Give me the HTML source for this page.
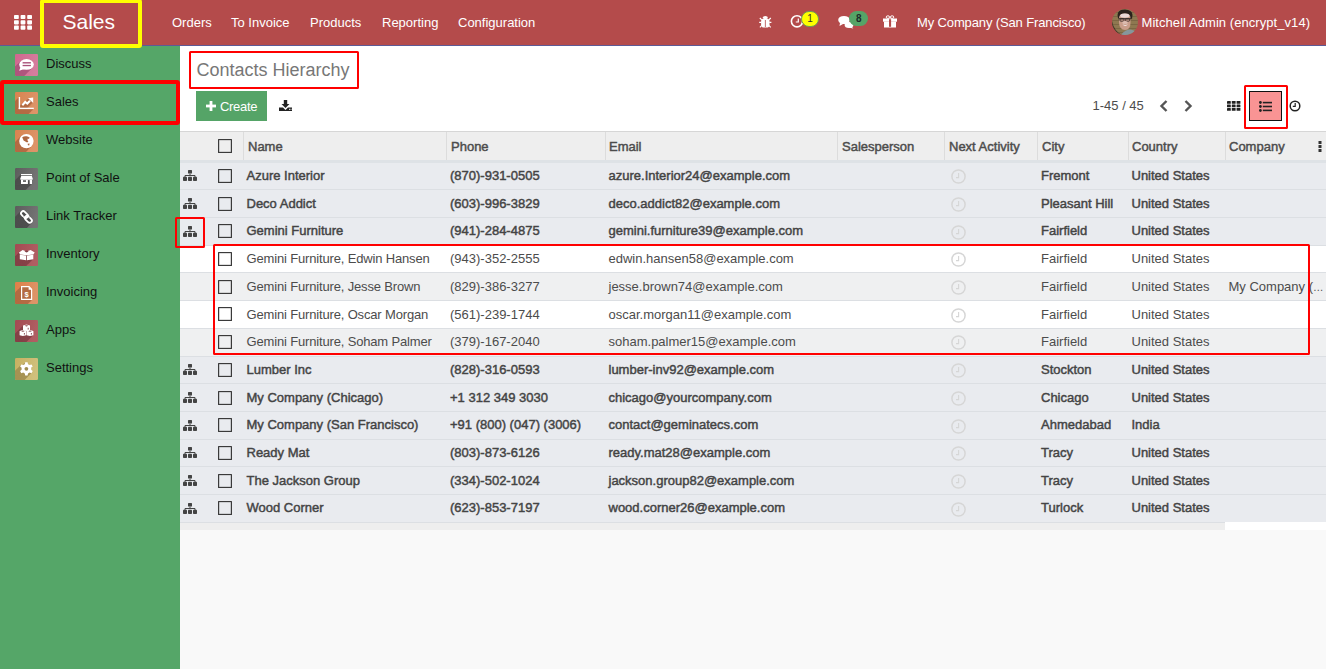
<!DOCTYPE html>
<html><head><meta charset="utf-8"><style>
html,body{margin:0;padding:0}
body{width:1326px;height:669px;overflow:hidden;position:relative;background:#f9f9f9;font-family:"Liberation Sans",sans-serif;}
.t{position:absolute;white-space:nowrap}
.b{-webkit-text-stroke:0.45px currentColor}
.hi{position:absolute}
.cb{position:absolute;width:12px;height:12px;border:1px solid #3a3a3a;border-radius:0.6px;box-shadow:inset 0 0 0 0.3px #777}
.rb{position:absolute}
#nav{position:absolute;left:0;top:0;width:1326px;height:45px;background:#b44b4b;border-bottom:1px solid #5d5a96}
#side{position:absolute;left:0;top:46px;width:180px;height:623px;background:#55a668}
#cp{position:absolute;left:180px;top:46px;width:1146px;height:85px;background:#fff}
</style></head><body>
<div id="side"></div>
<div id="cp"></div>
<div id="nav"></div>
<svg style="position:absolute;left:13.6px;top:14.6px" width="19" height="15" fill="#fff"><rect x="0.0" y="0.0" width="4.8" height="4.1" rx="0.8"/><rect x="6.6" y="0.0" width="4.8" height="4.1" rx="0.8"/><rect x="13.2" y="0.0" width="4.8" height="4.1" rx="0.8"/><rect x="0.0" y="5.3" width="4.8" height="4.1" rx="0.8"/><rect x="6.6" y="5.3" width="4.8" height="4.1" rx="0.8"/><rect x="13.2" y="5.3" width="4.8" height="4.1" rx="0.8"/><rect x="0.0" y="10.6" width="4.8" height="4.1" rx="0.8"/><rect x="6.6" y="10.6" width="4.8" height="4.1" rx="0.8"/><rect x="13.2" y="10.6" width="4.8" height="4.1" rx="0.8"/></svg>
<div class="t" style="left:62.5px;top:6.30px;font-size:21px;line-height:31px;color:#fff;">Sales</div>
<div class="t" style="left:172px;top:12.50px;font-size:13px;line-height:20px;color:#fff;">Orders</div>
<div class="t" style="left:231px;top:12.50px;font-size:13px;line-height:20px;color:#fff;">To Invoice</div>
<div class="t" style="left:310px;top:12.50px;font-size:13px;line-height:20px;color:#fff;">Products</div>
<div class="t" style="left:382px;top:12.50px;font-size:13px;line-height:20px;color:#fff;">Reporting</div>
<div class="t" style="left:458px;top:12.50px;font-size:13px;line-height:20px;color:#fff;">Configuration</div>
<svg style="position:absolute;left:759px;top:15px" width="13" height="13" viewBox="0 0 13 13" fill="#fff">
<ellipse cx="6.3" cy="2.6" rx="2.5" ry="1.6"/><rect x="2.1" y="3.4" width="8.4" height="9.2" rx="3.2"/>
<path d="M0.8 3 L2.9 5 M11.8 3 L9.7 5 M0.2 7.4 H2.4 M12.4 7.4 H10.2 M0.9 12.4 L2.8 10.4 M11.7 12.4 L9.8 10.4" stroke="#fff" stroke-width="1.1"/>
<rect x="5.9" y="5" width="0.8" height="7" fill="#b44b4b"/></svg>
<svg style="position:absolute;left:790px;top:14px" width="14" height="14" viewBox="0 0 14 14">
<circle cx="7" cy="7.3" r="5.6" fill="none" stroke="#fff" stroke-width="1.6"/>
<path d="M8.3 4.4 V8 H5.8" fill="none" stroke="#fff" stroke-width="1.2"/></svg>
<div style="position:absolute;left:801px;top:11.2px;width:15.6px;height:13.6px;border-radius:8px;background:#ffff00;border:1px solid #6c9d55"></div>
<div class="t" style="left:807.3px;top:8.70px;font-size:10px;line-height:20px;color:#333;">1</div>
<svg style="position:absolute;left:838px;top:15px" width="16" height="14" viewBox="0 0 16 14" fill="#fff">
<ellipse cx="6" cy="5" rx="5.8" ry="4.1"/><path d="M2 8 L1.5 11 L5.5 8.8 Z"/>
<ellipse cx="11" cy="10" rx="4.4" ry="3"/><path d="M13.5 11.5 L15.3 13.4 L10.5 12.6 Z"/></svg>
<div style="position:absolute;left:849px;top:11px;width:19px;height:15px;border-radius:8px;background:#55a467"></div>
<div class="t" style="left:856px;top:8.70px;font-size:10px;line-height:20px;color:#1c2a2a;font-weight:bold">8</div>
<svg style="position:absolute;left:883px;top:14.5px" width="14" height="13" viewBox="0 0 14 13" fill="#fff">
<ellipse cx="4.9" cy="2.1" rx="1.7" ry="1.3" fill="none" stroke="#fff" stroke-width="1"/><ellipse cx="9.1" cy="2.1" rx="1.7" ry="1.3" fill="none" stroke="#fff" stroke-width="1"/>
<rect x="0" y="3.5" width="14" height="3.2"/><rect x="1" y="6.6" width="12" height="5.9"/>
<rect x="6" y="4.2" width="2.1" height="7.6" fill="#b44b4b"/></svg>
<div class="t" style="left:917px;top:12.50px;font-size:13px;line-height:20px;color:#fff;letter-spacing:-0.13px">My Company (San Francisco)</div>
<svg style="position:absolute;left:1112px;top:9px" width="26" height="26" viewBox="0 0 26 26">
<defs><clipPath id="av"><circle cx="13" cy="13" r="13"/></clipPath><filter id="bl" filterUnits="userSpaceOnUse" x="-5" y="-5" width="36" height="36"><feGaussianBlur stdDeviation="0.45"/></filter></defs>
<g clip-path="url(#av)"><rect width="26" height="26" fill="#8e7850"/>
<g filter="url(#bl)">
<path d="M0 3.5 H26 M0 7.5 H26 M0 11.5 H26 M0 15.5 H26 M0 19.5 H26 M0 23.5 H26" stroke="#6e5a3a" stroke-width="0.8" opacity="0.7"/>
<path d="M0 12 Q2 22 10 26 H0 Z" fill="#3a2e24" opacity="0.9"/>
<path d="M5.5 6 Q6 0.5 13 0.6 Q20 0.8 20.5 6 L20 10 L18 9 Q17 5 13 5 Q8 5 7.5 9 L6 9Z" fill="#2a231e"/>
<path d="M7 9 Q7 4.5 13 4.5 Q18.5 4.5 18.5 9 V14 Q18.5 20.5 13 21 Q7.5 20.5 7 14Z" fill="#c99d8a"/>
<ellipse cx="12.8" cy="6.6" rx="4.6" ry="2.2" fill="#ead8d6"/>
<path d="M6.3 9.2 H19.2 V10.3 H6.3Z" fill="#2e2624"/>
<rect x="8" y="9.8" width="4" height="2.4" rx="0.8" fill="none" stroke="#2e2624" stroke-width="0.8"/>
<rect x="13.6" y="9.8" width="4" height="2.4" rx="0.8" fill="none" stroke="#2e2624" stroke-width="0.8"/>
<ellipse cx="13" cy="13.5" rx="2.8" ry="1.6" fill="#dcbcb0"/>
<path d="M10.4 15.6 Q13.2 18.4 16 15.6 Q13.2 16.4 10.4 15.6Z" fill="#f2e6e4"/>
<path d="M9 26 Q13 20.5 18 20.5 Q23 21 25 24 V26Z" fill="#86969c"/>
</g></g></svg>
<div class="t" style="left:1141.5px;top:12.50px;font-size:13px;line-height:20px;color:#fff;letter-spacing:0.06px">Mitchell Admin (encrypt_v14)</div>
<svg style="position:absolute;left:15px;top:54px" width="23" height="22" viewBox="0 0 23 22"><defs><linearGradient id="lg0" x1="0" y1="0" x2="1" y2="0.3"><stop offset="0" stop-color="#d0678e"/><stop offset="1" stop-color="#d57d9d"/></linearGradient><clipPath id="cp0"><rect width="23" height="22" rx="1.2"/></clipPath><g id="gl0"><ellipse cx="11.5" cy="10.4" rx="7.3" ry="5.3"/><path d="M4.2 16.8 L5.6 12.8 L9.5 15Z"/></g></defs><g clip-path="url(#cp0)"><rect width="23" height="22" fill="url(#lg0)"/><g color="#a9537a" fill="#a9537a" opacity="0.85"><use href="#gl0" x="-0.7" y="0.7"/><use href="#gl0" x="-1.4" y="1.4"/><use href="#gl0" x="-2.1" y="2.1"/><use href="#gl0" x="-2.8" y="2.8"/><use href="#gl0" x="-3.5" y="3.5"/><use href="#gl0" x="-4.2" y="4.2"/><use href="#gl0" x="-4.9" y="4.9"/><use href="#gl0" x="-5.6" y="5.6"/><use href="#gl0" x="-6.3" y="6.3"/><use href="#gl0" x="-7.0" y="7.0"/><use href="#gl0" x="-7.7" y="7.7"/><use href="#gl0" x="-8.4" y="8.4"/><use href="#gl0" x="-9.1" y="9.1"/><use href="#gl0" x="-9.8" y="9.8"/><use href="#gl0" x="-10.5" y="10.5"/><use href="#gl0" x="-11.2" y="11.2"/><use href="#gl0" x="-11.9" y="11.9"/><use href="#gl0" x="-12.6" y="12.6"/><use href="#gl0" x="-13.3" y="13.3"/><use href="#gl0" x="-14.0" y="14.0"/><use href="#gl0" x="-14.7" y="14.7"/><use href="#gl0" x="-15.4" y="15.4"/><use href="#gl0" x="-16.1" y="16.1"/><use href="#gl0" x="-16.8" y="16.8"/><use href="#gl0" x="-17.5" y="17.5"/><use href="#gl0" x="-18.2" y="18.2"/><use href="#gl0" x="-18.9" y="18.9"/><use href="#gl0" x="-19.6" y="19.6"/><use href="#gl0" x="-20.3" y="20.3"/><use href="#gl0" x="-21.0" y="21.0"/><use href="#gl0" x="-21.7" y="21.7"/><use href="#gl0" x="-22.4" y="22.4"/><use href="#gl0" x="-23.1" y="23.1"/></g><g color="#fff" fill="#fff"><ellipse cx="11.5" cy="10.4" rx="7.3" ry="5.3"/><path d="M4.2 16.8 L5.6 12.8 L9.5 15Z"/></g><rect x="7.6" y="8.1" width="8.3" height="1.4" fill="#a9537a"/><rect x="7.6" y="10.9" width="8.3" height="1.3" fill="#a9537a"/></g></svg>
<div class="t" style="left:46px;top:53.70px;font-size:13px;line-height:20px;color:#111;">Discuss</div>
<svg style="position:absolute;left:15px;top:92px" width="23" height="22" viewBox="0 0 23 22"><defs><linearGradient id="lg1" x1="0" y1="0" x2="1" y2="0.3"><stop offset="0" stop-color="#d9834f"/><stop offset="1" stop-color="#dc9468"/></linearGradient><clipPath id="cp1"><rect width="23" height="22" rx="1.2"/></clipPath><g id="gl1"><rect x="3.7" y="5" width="1.4" height="12.1"/><rect x="3.7" y="15.7" width="15.1" height="1.4"/><path d="M7.3 13.2 L10.2 10 L12.3 11.6 L15 8.8" fill="none" stroke="currentColor" stroke-width="2.1"/><path d="M13 6.2 L18.2 5.5 L18.2 10.9Z"/></g></defs><g clip-path="url(#cp1)"><rect width="23" height="22" fill="url(#lg1)"/><g color="#ad6640" fill="#ad6640" opacity="0.85"><use href="#gl1" x="-0.7" y="0.7"/><use href="#gl1" x="-1.4" y="1.4"/><use href="#gl1" x="-2.1" y="2.1"/><use href="#gl1" x="-2.8" y="2.8"/><use href="#gl1" x="-3.5" y="3.5"/><use href="#gl1" x="-4.2" y="4.2"/><use href="#gl1" x="-4.9" y="4.9"/><use href="#gl1" x="-5.6" y="5.6"/><use href="#gl1" x="-6.3" y="6.3"/><use href="#gl1" x="-7.0" y="7.0"/><use href="#gl1" x="-7.7" y="7.7"/><use href="#gl1" x="-8.4" y="8.4"/><use href="#gl1" x="-9.1" y="9.1"/><use href="#gl1" x="-9.8" y="9.8"/><use href="#gl1" x="-10.5" y="10.5"/><use href="#gl1" x="-11.2" y="11.2"/><use href="#gl1" x="-11.9" y="11.9"/><use href="#gl1" x="-12.6" y="12.6"/><use href="#gl1" x="-13.3" y="13.3"/><use href="#gl1" x="-14.0" y="14.0"/><use href="#gl1" x="-14.7" y="14.7"/><use href="#gl1" x="-15.4" y="15.4"/><use href="#gl1" x="-16.1" y="16.1"/><use href="#gl1" x="-16.8" y="16.8"/><use href="#gl1" x="-17.5" y="17.5"/><use href="#gl1" x="-18.2" y="18.2"/><use href="#gl1" x="-18.9" y="18.9"/><use href="#gl1" x="-19.6" y="19.6"/><use href="#gl1" x="-20.3" y="20.3"/><use href="#gl1" x="-21.0" y="21.0"/><use href="#gl1" x="-21.7" y="21.7"/><use href="#gl1" x="-22.4" y="22.4"/><use href="#gl1" x="-23.1" y="23.1"/></g><g color="#fff" fill="#fff"><rect x="3.7" y="5" width="1.4" height="12.1"/><rect x="3.7" y="15.7" width="15.1" height="1.4"/><path d="M7.3 13.2 L10.2 10 L12.3 11.6 L15 8.8" fill="none" stroke="#fff" stroke-width="2.1"/><path d="M13 6.2 L18.2 5.5 L18.2 10.9Z"/></g></g></svg>
<div class="t" style="left:46px;top:91.70px;font-size:13px;line-height:20px;color:#111;">Sales</div>
<svg style="position:absolute;left:15px;top:130px" width="23" height="22" viewBox="0 0 23 22"><defs><linearGradient id="lg2" x1="0" y1="0" x2="1" y2="0.3"><stop offset="0" stop-color="#d9834f"/><stop offset="1" stop-color="#dc9468"/></linearGradient><clipPath id="cp2"><rect width="23" height="22" rx="1.2"/></clipPath><g id="gl2"><circle cx="11.4" cy="11.1" r="7.2"/></g></defs><g clip-path="url(#cp2)"><rect width="23" height="22" fill="url(#lg2)"/><g color="#ad6640" fill="#ad6640" opacity="0.85"><use href="#gl2" x="-0.7" y="0.7"/><use href="#gl2" x="-1.4" y="1.4"/><use href="#gl2" x="-2.1" y="2.1"/><use href="#gl2" x="-2.8" y="2.8"/><use href="#gl2" x="-3.5" y="3.5"/><use href="#gl2" x="-4.2" y="4.2"/><use href="#gl2" x="-4.9" y="4.9"/><use href="#gl2" x="-5.6" y="5.6"/><use href="#gl2" x="-6.3" y="6.3"/><use href="#gl2" x="-7.0" y="7.0"/><use href="#gl2" x="-7.7" y="7.7"/><use href="#gl2" x="-8.4" y="8.4"/><use href="#gl2" x="-9.1" y="9.1"/><use href="#gl2" x="-9.8" y="9.8"/><use href="#gl2" x="-10.5" y="10.5"/><use href="#gl2" x="-11.2" y="11.2"/><use href="#gl2" x="-11.9" y="11.9"/><use href="#gl2" x="-12.6" y="12.6"/><use href="#gl2" x="-13.3" y="13.3"/><use href="#gl2" x="-14.0" y="14.0"/><use href="#gl2" x="-14.7" y="14.7"/><use href="#gl2" x="-15.4" y="15.4"/><use href="#gl2" x="-16.1" y="16.1"/><use href="#gl2" x="-16.8" y="16.8"/><use href="#gl2" x="-17.5" y="17.5"/><use href="#gl2" x="-18.2" y="18.2"/><use href="#gl2" x="-18.9" y="18.9"/><use href="#gl2" x="-19.6" y="19.6"/><use href="#gl2" x="-20.3" y="20.3"/><use href="#gl2" x="-21.0" y="21.0"/><use href="#gl2" x="-21.7" y="21.7"/><use href="#gl2" x="-22.4" y="22.4"/><use href="#gl2" x="-23.1" y="23.1"/></g><g color="#fff" fill="#fff"><circle cx="11.4" cy="11.1" r="7.2"/></g><path d="M7.2 7.2 Q9 5.9 11.5 6.2 L13.2 6.8 L14.8 7.8 L13.6 9 L12.8 8.6 L12.4 10.3 L13.4 11.6 L12.1 12.6 L10.3 11.4 L8.6 10.6 Z M12.6 13.8 L14.6 13.6 L14.2 15.6 L13 15.2Z" fill="#ad6640"/></g></svg>
<div class="t" style="left:46px;top:129.70px;font-size:13px;line-height:20px;color:#111;">Website</div>
<svg style="position:absolute;left:15px;top:168px" width="23" height="22" viewBox="0 0 23 22"><defs><linearGradient id="lg3" x1="0" y1="0" x2="1" y2="0.3"><stop offset="0" stop-color="#5c5c5c"/><stop offset="1" stop-color="#747474"/></linearGradient><clipPath id="cp3"><rect width="23" height="22" rx="1.2"/></clipPath><g id="gl3"><rect x="6" y="6" width="11" height="1.3"/><path d="M6.2 7.9 H16.8 L18 11.5 H5Z"/><rect x="6" y="11.4" width="11" height="4.6"/></g></defs><g clip-path="url(#cp3)"><rect width="23" height="22" fill="url(#lg3)"/><g color="#4a4a4a" fill="#4a4a4a" opacity="0.85"><use href="#gl3" x="-0.7" y="0.7"/><use href="#gl3" x="-1.4" y="1.4"/><use href="#gl3" x="-2.1" y="2.1"/><use href="#gl3" x="-2.8" y="2.8"/><use href="#gl3" x="-3.5" y="3.5"/><use href="#gl3" x="-4.2" y="4.2"/><use href="#gl3" x="-4.9" y="4.9"/><use href="#gl3" x="-5.6" y="5.6"/><use href="#gl3" x="-6.3" y="6.3"/><use href="#gl3" x="-7.0" y="7.0"/><use href="#gl3" x="-7.7" y="7.7"/><use href="#gl3" x="-8.4" y="8.4"/><use href="#gl3" x="-9.1" y="9.1"/><use href="#gl3" x="-9.8" y="9.8"/><use href="#gl3" x="-10.5" y="10.5"/><use href="#gl3" x="-11.2" y="11.2"/><use href="#gl3" x="-11.9" y="11.9"/><use href="#gl3" x="-12.6" y="12.6"/><use href="#gl3" x="-13.3" y="13.3"/><use href="#gl3" x="-14.0" y="14.0"/><use href="#gl3" x="-14.7" y="14.7"/><use href="#gl3" x="-15.4" y="15.4"/><use href="#gl3" x="-16.1" y="16.1"/><use href="#gl3" x="-16.8" y="16.8"/><use href="#gl3" x="-17.5" y="17.5"/><use href="#gl3" x="-18.2" y="18.2"/><use href="#gl3" x="-18.9" y="18.9"/><use href="#gl3" x="-19.6" y="19.6"/><use href="#gl3" x="-20.3" y="20.3"/><use href="#gl3" x="-21.0" y="21.0"/><use href="#gl3" x="-21.7" y="21.7"/><use href="#gl3" x="-22.4" y="22.4"/><use href="#gl3" x="-23.1" y="23.1"/></g><g color="#fff" fill="#fff"><rect x="6" y="6" width="11" height="1.3"/><path d="M6.2 7.9 H16.8 L18 11.5 H5Z"/><rect x="6" y="11.4" width="11" height="4.6"/></g><rect x="8" y="12.3" width="3" height="1.5" fill="#4a4a4a"/><rect x="12.9" y="12.1" width="1.8" height="3.9" fill="#4a4a4a"/></g></svg>
<div class="t" style="left:46px;top:167.70px;font-size:13px;line-height:20px;color:#111;">Point of Sale</div>
<svg style="position:absolute;left:15px;top:206px" width="23" height="22" viewBox="0 0 23 22"><defs><linearGradient id="lg4" x1="0" y1="0" x2="1" y2="0.3"><stop offset="0" stop-color="#5c5c5c"/><stop offset="1" stop-color="#747474"/></linearGradient><clipPath id="cp4"><rect width="23" height="22" rx="1.2"/></clipPath><g id="gl4"><g fill="none" stroke="currentColor" stroke-width="1.8" stroke-linecap="round"><path d="M-0.2 2.2 H-1.8 A2.2 2.2 0 0 1 -1.8 -2.2 H1.8 A2.2 2.2 0 0 1 1.8 2.2 H1.6" transform="translate(9.5 8.6) rotate(45)"/><path d="M0.2 -2.2 H1.8 A2.2 2.2 0 0 1 1.8 2.2 H-1.8 A2.2 2.2 0 0 1 -1.8 -2.2 H-1.6" transform="translate(13.4 13.3) rotate(45)"/></g></g></defs><g clip-path="url(#cp4)"><rect width="23" height="22" fill="url(#lg4)"/><g color="#4a4a4a" fill="#4a4a4a" opacity="0.85"><use href="#gl4" x="-0.7" y="0.7"/><use href="#gl4" x="-1.4" y="1.4"/><use href="#gl4" x="-2.1" y="2.1"/><use href="#gl4" x="-2.8" y="2.8"/><use href="#gl4" x="-3.5" y="3.5"/><use href="#gl4" x="-4.2" y="4.2"/><use href="#gl4" x="-4.9" y="4.9"/><use href="#gl4" x="-5.6" y="5.6"/><use href="#gl4" x="-6.3" y="6.3"/><use href="#gl4" x="-7.0" y="7.0"/><use href="#gl4" x="-7.7" y="7.7"/><use href="#gl4" x="-8.4" y="8.4"/><use href="#gl4" x="-9.1" y="9.1"/><use href="#gl4" x="-9.8" y="9.8"/><use href="#gl4" x="-10.5" y="10.5"/><use href="#gl4" x="-11.2" y="11.2"/><use href="#gl4" x="-11.9" y="11.9"/><use href="#gl4" x="-12.6" y="12.6"/><use href="#gl4" x="-13.3" y="13.3"/><use href="#gl4" x="-14.0" y="14.0"/><use href="#gl4" x="-14.7" y="14.7"/><use href="#gl4" x="-15.4" y="15.4"/><use href="#gl4" x="-16.1" y="16.1"/><use href="#gl4" x="-16.8" y="16.8"/><use href="#gl4" x="-17.5" y="17.5"/><use href="#gl4" x="-18.2" y="18.2"/><use href="#gl4" x="-18.9" y="18.9"/><use href="#gl4" x="-19.6" y="19.6"/><use href="#gl4" x="-20.3" y="20.3"/><use href="#gl4" x="-21.0" y="21.0"/><use href="#gl4" x="-21.7" y="21.7"/><use href="#gl4" x="-22.4" y="22.4"/><use href="#gl4" x="-23.1" y="23.1"/></g><g color="#fff" fill="#fff"><g fill="none" stroke="#fff" stroke-width="1.8" stroke-linecap="round"><path d="M-0.2 2.2 H-1.8 A2.2 2.2 0 0 1 -1.8 -2.2 H1.8 A2.2 2.2 0 0 1 1.8 2.2 H1.6" transform="translate(9.5 8.6) rotate(45)"/><path d="M0.2 -2.2 H1.8 A2.2 2.2 0 0 1 1.8 2.2 H-1.8 A2.2 2.2 0 0 1 -1.8 -2.2 H-1.6" transform="translate(13.4 13.3) rotate(45)"/></g></g></g></svg>
<div class="t" style="left:46px;top:205.70px;font-size:13px;line-height:20px;color:#111;">Link Tracker</div>
<svg style="position:absolute;left:15px;top:244px" width="23" height="22" viewBox="0 0 23 22"><defs><linearGradient id="lg5" x1="0" y1="0" x2="1" y2="0.3"><stop offset="0" stop-color="#a34a52"/><stop offset="1" stop-color="#b05e62"/></linearGradient><clipPath id="cp5"><rect width="23" height="22" rx="1.2"/></clipPath><g id="gl5"><path d="M4 8.4 L7.6 6 L11.6 7.6 L15.6 6 L19.7 8.4 L18.4 10.6 L11.6 11.2 L5 10.6Z"/><path d="M4.8 10.8 L11.2 11.6 V16.2 L4.8 15.2Z M18.3 10.8 L12 11.6 V16.2 L18.3 15.2Z"/></g></defs><g clip-path="url(#cp5)"><rect width="23" height="22" fill="url(#lg5)"/><g color="#7f3f45" fill="#7f3f45" opacity="0.85"><use href="#gl5" x="-0.7" y="0.7"/><use href="#gl5" x="-1.4" y="1.4"/><use href="#gl5" x="-2.1" y="2.1"/><use href="#gl5" x="-2.8" y="2.8"/><use href="#gl5" x="-3.5" y="3.5"/><use href="#gl5" x="-4.2" y="4.2"/><use href="#gl5" x="-4.9" y="4.9"/><use href="#gl5" x="-5.6" y="5.6"/><use href="#gl5" x="-6.3" y="6.3"/><use href="#gl5" x="-7.0" y="7.0"/><use href="#gl5" x="-7.7" y="7.7"/><use href="#gl5" x="-8.4" y="8.4"/><use href="#gl5" x="-9.1" y="9.1"/><use href="#gl5" x="-9.8" y="9.8"/><use href="#gl5" x="-10.5" y="10.5"/><use href="#gl5" x="-11.2" y="11.2"/><use href="#gl5" x="-11.9" y="11.9"/><use href="#gl5" x="-12.6" y="12.6"/><use href="#gl5" x="-13.3" y="13.3"/><use href="#gl5" x="-14.0" y="14.0"/><use href="#gl5" x="-14.7" y="14.7"/><use href="#gl5" x="-15.4" y="15.4"/><use href="#gl5" x="-16.1" y="16.1"/><use href="#gl5" x="-16.8" y="16.8"/><use href="#gl5" x="-17.5" y="17.5"/><use href="#gl5" x="-18.2" y="18.2"/><use href="#gl5" x="-18.9" y="18.9"/><use href="#gl5" x="-19.6" y="19.6"/><use href="#gl5" x="-20.3" y="20.3"/><use href="#gl5" x="-21.0" y="21.0"/><use href="#gl5" x="-21.7" y="21.7"/><use href="#gl5" x="-22.4" y="22.4"/><use href="#gl5" x="-23.1" y="23.1"/></g><g color="#fff" fill="#fff"><path d="M4 8.4 L7.6 6 L11.6 7.6 L15.6 6 L19.7 8.4 L18.4 10.6 L11.6 11.2 L5 10.6Z"/><path d="M4.8 10.8 L11.2 11.6 V16.2 L4.8 15.2Z M18.3 10.8 L12 11.6 V16.2 L18.3 15.2Z"/></g><path d="M9.5 7.6 L11.6 6.6 L13.7 7.6 L11.6 8.6Z" fill="#7f3f45"/></g></svg>
<div class="t" style="left:46px;top:243.70px;font-size:13px;line-height:20px;color:#111;">Inventory</div>
<svg style="position:absolute;left:15px;top:282px" width="23" height="22" viewBox="0 0 23 22"><defs><linearGradient id="lg6" x1="0" y1="0" x2="1" y2="0.3"><stop offset="0" stop-color="#df7f47"/><stop offset="1" stop-color="#dc9468"/></linearGradient><clipPath id="cp6"><rect width="23" height="22" rx="1.2"/></clipPath><g id="gl6"><path d="M6.6 4.7 H14 L16.6 7.3 V17.4 H6.6Z" fill="none" stroke="currentColor" stroke-width="1.2"/><path d="M13.6 4.6 V7.7 H16.7Z"/><text x="11.6" y="14.6" text-anchor="middle" font-size="7.5" font-weight="bold" font-family="Liberation Sans" fill="currentColor">$</text></g></defs><g clip-path="url(#cp6)"><rect width="23" height="22" fill="url(#lg6)"/><g color="#ad6640" fill="#ad6640" opacity="0.85"><use href="#gl6" x="-0.7" y="0.7"/><use href="#gl6" x="-1.4" y="1.4"/><use href="#gl6" x="-2.1" y="2.1"/><use href="#gl6" x="-2.8" y="2.8"/><use href="#gl6" x="-3.5" y="3.5"/><use href="#gl6" x="-4.2" y="4.2"/><use href="#gl6" x="-4.9" y="4.9"/><use href="#gl6" x="-5.6" y="5.6"/><use href="#gl6" x="-6.3" y="6.3"/><use href="#gl6" x="-7.0" y="7.0"/><use href="#gl6" x="-7.7" y="7.7"/><use href="#gl6" x="-8.4" y="8.4"/><use href="#gl6" x="-9.1" y="9.1"/><use href="#gl6" x="-9.8" y="9.8"/><use href="#gl6" x="-10.5" y="10.5"/><use href="#gl6" x="-11.2" y="11.2"/><use href="#gl6" x="-11.9" y="11.9"/><use href="#gl6" x="-12.6" y="12.6"/><use href="#gl6" x="-13.3" y="13.3"/><use href="#gl6" x="-14.0" y="14.0"/><use href="#gl6" x="-14.7" y="14.7"/><use href="#gl6" x="-15.4" y="15.4"/><use href="#gl6" x="-16.1" y="16.1"/><use href="#gl6" x="-16.8" y="16.8"/><use href="#gl6" x="-17.5" y="17.5"/><use href="#gl6" x="-18.2" y="18.2"/><use href="#gl6" x="-18.9" y="18.9"/><use href="#gl6" x="-19.6" y="19.6"/><use href="#gl6" x="-20.3" y="20.3"/><use href="#gl6" x="-21.0" y="21.0"/><use href="#gl6" x="-21.7" y="21.7"/><use href="#gl6" x="-22.4" y="22.4"/><use href="#gl6" x="-23.1" y="23.1"/></g><g color="#fff" fill="#fff"><path d="M6.6 4.7 H14 L16.6 7.3 V17.4 H6.6Z" fill="none" stroke="#fff" stroke-width="1.2"/><path d="M13.6 4.6 V7.7 H16.7Z"/><text x="11.6" y="14.6" text-anchor="middle" font-size="7.5" font-weight="bold" font-family="Liberation Sans" fill="#fff">$</text></g></g></svg>
<div class="t" style="left:46px;top:281.70px;font-size:13px;line-height:20px;color:#111;">Invoicing</div>
<svg style="position:absolute;left:15px;top:320px" width="23" height="22" viewBox="0 0 23 22"><defs><linearGradient id="lg7" x1="0" y1="0" x2="1" y2="0.3"><stop offset="0" stop-color="#a34a52"/><stop offset="1" stop-color="#b05e62"/></linearGradient><clipPath id="cp7"><rect width="23" height="22" rx="1.2"/></clipPath><g id="gl7"><path d="M8 5.5 L11.5 4.4 L15 5.5 V10 L11.5 11 L8 10Z M4.6 11 L7.9 10 L11.2 11 V15.2 L7.9 16.1 L4.6 15.2Z M11.6 11 L15 10 L18.4 11 V15.2 L15 16.1 L11.6 15.2Z"/></g></defs><g clip-path="url(#cp7)"><rect width="23" height="22" fill="url(#lg7)"/><g color="#7f3f45" fill="#7f3f45" opacity="0.85"><use href="#gl7" x="-0.7" y="0.7"/><use href="#gl7" x="-1.4" y="1.4"/><use href="#gl7" x="-2.1" y="2.1"/><use href="#gl7" x="-2.8" y="2.8"/><use href="#gl7" x="-3.5" y="3.5"/><use href="#gl7" x="-4.2" y="4.2"/><use href="#gl7" x="-4.9" y="4.9"/><use href="#gl7" x="-5.6" y="5.6"/><use href="#gl7" x="-6.3" y="6.3"/><use href="#gl7" x="-7.0" y="7.0"/><use href="#gl7" x="-7.7" y="7.7"/><use href="#gl7" x="-8.4" y="8.4"/><use href="#gl7" x="-9.1" y="9.1"/><use href="#gl7" x="-9.8" y="9.8"/><use href="#gl7" x="-10.5" y="10.5"/><use href="#gl7" x="-11.2" y="11.2"/><use href="#gl7" x="-11.9" y="11.9"/><use href="#gl7" x="-12.6" y="12.6"/><use href="#gl7" x="-13.3" y="13.3"/><use href="#gl7" x="-14.0" y="14.0"/><use href="#gl7" x="-14.7" y="14.7"/><use href="#gl7" x="-15.4" y="15.4"/><use href="#gl7" x="-16.1" y="16.1"/><use href="#gl7" x="-16.8" y="16.8"/><use href="#gl7" x="-17.5" y="17.5"/><use href="#gl7" x="-18.2" y="18.2"/><use href="#gl7" x="-18.9" y="18.9"/><use href="#gl7" x="-19.6" y="19.6"/><use href="#gl7" x="-20.3" y="20.3"/><use href="#gl7" x="-21.0" y="21.0"/><use href="#gl7" x="-21.7" y="21.7"/><use href="#gl7" x="-22.4" y="22.4"/><use href="#gl7" x="-23.1" y="23.1"/></g><g color="#fff" fill="#fff"><path d="M8 5.5 L11.5 4.4 L15 5.5 V10 L11.5 11 L8 10Z M4.6 11 L7.9 10 L11.2 11 V15.2 L7.9 16.1 L4.6 15.2Z M11.6 11 L15 10 L18.4 11 V15.2 L15 16.1 L11.6 15.2Z"/></g><path d="M9.6 5.8 L11.5 5.2 L13.4 5.8 L11.5 6.4Z M6.2 11.2 L7.9 10.6 L9.6 11.2 L7.9 11.8Z M13.2 11.2 L15 10.6 L16.8 11.2 L15 11.8Z" fill="#7f3f45"/><path d="M13.2 7.8 V9.6 M9.4 13 V14.6 M16.4 13 V14.6" stroke="#7f3f45" stroke-width="0.9"/></g></svg>
<div class="t" style="left:46px;top:319.70px;font-size:13px;line-height:20px;color:#111;">Apps</div>
<svg style="position:absolute;left:15px;top:358px" width="23" height="22" viewBox="0 0 23 22"><defs><linearGradient id="lg8" x1="0" y1="0" x2="1" y2="0.3"><stop offset="0" stop-color="#c8b060"/><stop offset="1" stop-color="#cfc07c"/></linearGradient><clipPath id="cp8"><rect width="23" height="22" rx="1.2"/></clipPath><g id="gl8"><path d="M10.2 4.2 H12.6 L13 6.2 L14.6 7.1 L16.5 6.4 L17.7 8.5 L16.2 9.8 V11.8 L17.7 13.1 L16.5 15.2 L14.6 14.5 L13 15.4 L12.6 17.4 H10.2 L9.8 15.4 L8.2 14.5 L6.3 15.2 L5.1 13.1 L6.6 11.8 V9.8 L5.1 8.5 L6.3 6.4 L8.2 7.1 L9.8 6.2Z"/></g></defs><g clip-path="url(#cp8)"><rect width="23" height="22" fill="url(#lg8)"/><g color="#a08d50" fill="#a08d50" opacity="0.85"><use href="#gl8" x="-0.7" y="0.7"/><use href="#gl8" x="-1.4" y="1.4"/><use href="#gl8" x="-2.1" y="2.1"/><use href="#gl8" x="-2.8" y="2.8"/><use href="#gl8" x="-3.5" y="3.5"/><use href="#gl8" x="-4.2" y="4.2"/><use href="#gl8" x="-4.9" y="4.9"/><use href="#gl8" x="-5.6" y="5.6"/><use href="#gl8" x="-6.3" y="6.3"/><use href="#gl8" x="-7.0" y="7.0"/><use href="#gl8" x="-7.7" y="7.7"/><use href="#gl8" x="-8.4" y="8.4"/><use href="#gl8" x="-9.1" y="9.1"/><use href="#gl8" x="-9.8" y="9.8"/><use href="#gl8" x="-10.5" y="10.5"/><use href="#gl8" x="-11.2" y="11.2"/><use href="#gl8" x="-11.9" y="11.9"/><use href="#gl8" x="-12.6" y="12.6"/><use href="#gl8" x="-13.3" y="13.3"/><use href="#gl8" x="-14.0" y="14.0"/><use href="#gl8" x="-14.7" y="14.7"/><use href="#gl8" x="-15.4" y="15.4"/><use href="#gl8" x="-16.1" y="16.1"/><use href="#gl8" x="-16.8" y="16.8"/><use href="#gl8" x="-17.5" y="17.5"/><use href="#gl8" x="-18.2" y="18.2"/><use href="#gl8" x="-18.9" y="18.9"/><use href="#gl8" x="-19.6" y="19.6"/><use href="#gl8" x="-20.3" y="20.3"/><use href="#gl8" x="-21.0" y="21.0"/><use href="#gl8" x="-21.7" y="21.7"/><use href="#gl8" x="-22.4" y="22.4"/><use href="#gl8" x="-23.1" y="23.1"/></g><g color="#fff" fill="#fff"><path d="M10.2 4.2 H12.6 L13 6.2 L14.6 7.1 L16.5 6.4 L17.7 8.5 L16.2 9.8 V11.8 L17.7 13.1 L16.5 15.2 L14.6 14.5 L13 15.4 L12.6 17.4 H10.2 L9.8 15.4 L8.2 14.5 L6.3 15.2 L5.1 13.1 L6.6 11.8 V9.8 L5.1 8.5 L6.3 6.4 L8.2 7.1 L9.8 6.2Z"/></g><circle cx="11.4" cy="10.8" r="1.9" fill="#a08d50"/></g></svg>
<div class="t" style="left:46px;top:357.70px;font-size:13px;line-height:20px;color:#111;">Settings</div>
<div class="t" style="left:196.5px;top:57.20px;font-size:18px;line-height:27px;color:#777;">Contacts Hierarchy</div>
<div style="position:absolute;left:196px;top:91px;width:71px;height:30px;background:#55a467"></div>
<svg style="position:absolute;left:206px;top:101px" width="10" height="10"><rect x="3.6" y="0" width="2.8" height="10" fill="#fff"/><rect x="0" y="3.6" width="10" height="2.8" fill="#fff"/></svg>
<div class="t" style="left:220px;top:96.90px;font-size:13px;line-height:20px;color:#fff;letter-spacing:-0.3px">Create</div>
<svg style="position:absolute;left:279px;top:100px" width="13" height="11" viewBox="0 0 13 11"><path d="M4.8 0 H8.2 V4 H10.5 L6.5 8 L2.5 4 H4.8Z" fill="#222"/><path d="M0 7.5 H4 L6.5 10 L9 7.5 H13 V11 H0Z" fill="#222"/><rect x="10" y="8.8" width="1" height="1" fill="#fff"/><rect x="11.5" y="8.8" width="1" height="1" fill="#fff"/></svg>
<div class="t" style="left:1092.5px;top:95.50px;font-size:13px;line-height:20px;color:#4c4c4c;">1-45 / 45</div>
<svg style="position:absolute;left:1159px;top:100px" width="9" height="12" viewBox="0 0 9 12"><path d="M7.5 1 L2.5 6 L7.5 11" stroke="#555" stroke-width="2.4" fill="none"/></svg>
<svg style="position:absolute;left:1184px;top:100px" width="9" height="12" viewBox="0 0 9 12"><path d="M1.5 1 L6.5 6 L1.5 11" stroke="#555" stroke-width="2.4" fill="none"/></svg>
<svg style="position:absolute;left:1227.2px;top:100.8px" width="14" height="10" fill="#222"><rect x="0.0" y="0.0" width="3.8" height="2.8" rx="0.4"/><rect x="4.8" y="0.0" width="3.8" height="2.8" rx="0.4"/><rect x="9.6" y="0.0" width="3.8" height="2.8" rx="0.4"/><rect x="0.0" y="3.5" width="3.8" height="2.8" rx="0.4"/><rect x="4.8" y="3.5" width="3.8" height="2.8" rx="0.4"/><rect x="9.6" y="3.5" width="3.8" height="2.8" rx="0.4"/><rect x="0.0" y="7.0" width="3.8" height="2.8" rx="0.4"/><rect x="4.8" y="7.0" width="3.8" height="2.8" rx="0.4"/><rect x="9.6" y="7.0" width="3.8" height="2.8" rx="0.4"/></svg>
<div style="position:absolute;left:1249px;top:91px;width:31px;height:28px;border:1px solid #111;background:#f99494"></div>
<svg style="position:absolute;left:1259px;top:101px" width="13" height="11" viewBox="0 0 13 11" fill="#222"><circle cx="1.4" cy="1.5" r="1.4"/><circle cx="1.4" cy="5.5" r="1.4"/><circle cx="1.4" cy="9.5" r="1.4"/><rect x="3.8" y="0.8" width="9.2" height="1.6"/><rect x="3.8" y="4.7" width="9.2" height="1.6"/><rect x="3.8" y="8.6" width="9.2" height="1.6"/></svg>
<svg style="position:absolute;left:1289.3px;top:100.2px" width="12" height="12" viewBox="0 0 12 12"><circle cx="6" cy="6" r="4.8" fill="none" stroke="#222" stroke-width="1.5"/><path d="M6.2 3 V6.4 H3.8" fill="none" stroke="#222" stroke-width="1.2"/></svg>
<div style="position:absolute;left:180px;top:131px;width:1146px;height:1px;background:#d6d6d6"></div>
<div style="position:absolute;left:180px;top:132px;width:1146px;height:28px;background:#eeeeee"></div>
<div style="position:absolute;left:243.0px;top:132px;width:1px;height:28px;background:#dcdcdc"></div>
<div style="position:absolute;left:446.0px;top:132px;width:1px;height:28px;background:#dcdcdc"></div>
<div style="position:absolute;left:605.0px;top:132px;width:1px;height:28px;background:#dcdcdc"></div>
<div style="position:absolute;left:837.0px;top:132px;width:1px;height:28px;background:#dcdcdc"></div>
<div style="position:absolute;left:944.0px;top:132px;width:1px;height:28px;background:#dcdcdc"></div>
<div style="position:absolute;left:1037.0px;top:132px;width:1px;height:28px;background:#dcdcdc"></div>
<div style="position:absolute;left:1128.0px;top:132px;width:1px;height:28px;background:#dcdcdc"></div>
<div style="position:absolute;left:1225.0px;top:132px;width:1px;height:28px;background:#dcdcdc"></div>
<div class="cb" style="left:218px;top:139px"></div>
<div class="t b" style="left:248px;top:136.80px;font-size:13px;line-height:20px;color:#4c4c4c;">Name</div>
<div class="t b" style="left:451px;top:136.80px;font-size:13px;line-height:20px;color:#4c4c4c;">Phone</div>
<div class="t b" style="left:609px;top:136.80px;font-size:13px;line-height:20px;color:#4c4c4c;">Email</div>
<div class="t b" style="left:842px;top:136.80px;font-size:13px;line-height:20px;color:#4c4c4c;">Salesperson</div>
<div class="t b" style="left:949px;top:136.80px;font-size:13px;line-height:20px;color:#4c4c4c;">Next Activity</div>
<div class="t b" style="left:1042px;top:136.80px;font-size:13px;line-height:20px;color:#4c4c4c;">City</div>
<div class="t b" style="left:1132px;top:136.80px;font-size:13px;line-height:20px;color:#4c4c4c;">Country</div>
<div class="t b" style="left:1229px;top:136.80px;font-size:13px;line-height:20px;color:#4c4c4c;">Company</div>
<svg style="position:absolute;left:1318px;top:141px" width="4" height="11" fill="#333"><rect x="0.5" y="0" width="3" height="3"/><rect x="0.5" y="4" width="3" height="3"/><rect x="0.5" y="8" width="3" height="3"/></svg>
<div style="position:absolute;left:180px;top:161px;width:1146px;height:362px;background:#e9ebef"></div>
<div style="position:absolute;left:180px;top:162px;width:1146px;height:27px;background:#e9ebef;border-top:1px solid #dcdfe3;box-sizing:border-box"></div>
<svg class="hi" style="left:183px;top:170.20px" width="14" height="11" viewBox="0 0 14 11" fill="#444"><rect x="5" y="0" width="4" height="3.5" rx="0.5"/><path d="M7 3.5 V5.5 M2 7 V5.5 H12 V7" stroke="#444" stroke-width="1" fill="none"/><rect x="0" y="6.8" width="4" height="4.2" rx="0.8"/><rect x="5" y="6.8" width="4" height="4.2" rx="0.8"/><rect x="10" y="6.8" width="4" height="4.2" rx="0.8"/></svg>
<div class="cb" style="left:218px;top:168.90px"></div>
<div class="t b" style="left:246.5px;top:166.00px;font-size:13px;line-height:20px;color:#444;">Azure Interior</div>
<div class="t b" style="left:450px;top:166.00px;font-size:13px;line-height:20px;color:#444;">(870)-931-0505</div>
<div class="t b" style="left:608.5px;top:166.00px;font-size:13px;line-height:20px;color:#444;">azure.Interior24@example.com</div>
<svg class="hi" style="left:951px;top:169.20px" width="15" height="15" viewBox="0 0 15 15"><circle cx="7.5" cy="7.5" r="6.6" fill="none" stroke="#d6d6d6" stroke-width="1.5"/><path d="M7.6 4 V8.6 H5" fill="none" stroke="#d6d6d6" stroke-width="1.1"/></svg>
<div class="t b" style="left:1041px;top:166.00px;font-size:13px;line-height:20px;color:#444;">Fremont</div>
<div class="t b" style="left:1131.5px;top:166.00px;font-size:13px;line-height:20px;color:#444;">United States</div>
<div style="position:absolute;left:180px;top:189px;width:1146px;height:28px;background:#e9ebef;border-top:1px solid #dcdfe3;box-sizing:border-box"></div>
<svg class="hi" style="left:183px;top:197.90px" width="14" height="11" viewBox="0 0 14 11" fill="#444"><rect x="5" y="0" width="4" height="3.5" rx="0.5"/><path d="M7 3.5 V5.5 M2 7 V5.5 H12 V7" stroke="#444" stroke-width="1" fill="none"/><rect x="0" y="6.8" width="4" height="4.2" rx="0.8"/><rect x="5" y="6.8" width="4" height="4.2" rx="0.8"/><rect x="10" y="6.8" width="4" height="4.2" rx="0.8"/></svg>
<div class="cb" style="left:218px;top:196.60px"></div>
<div class="t b" style="left:246.5px;top:193.70px;font-size:13px;line-height:20px;color:#444;">Deco Addict</div>
<div class="t b" style="left:450px;top:193.70px;font-size:13px;line-height:20px;color:#444;">(603)-996-3829</div>
<div class="t b" style="left:608.5px;top:193.70px;font-size:13px;line-height:20px;color:#444;">deco.addict82@example.com</div>
<svg class="hi" style="left:951px;top:196.90px" width="15" height="15" viewBox="0 0 15 15"><circle cx="7.5" cy="7.5" r="6.6" fill="none" stroke="#d6d6d6" stroke-width="1.5"/><path d="M7.6 4 V8.6 H5" fill="none" stroke="#d6d6d6" stroke-width="1.1"/></svg>
<div class="t b" style="left:1041px;top:193.70px;font-size:13px;line-height:20px;color:#444;">Pleasant Hill</div>
<div class="t b" style="left:1131.5px;top:193.70px;font-size:13px;line-height:20px;color:#444;">United States</div>
<div style="position:absolute;left:180px;top:217px;width:1146px;height:28px;background:#e9ebef;border-top:1px solid #dcdfe3;box-sizing:border-box"></div>
<svg class="hi" style="left:183px;top:225.60px" width="14" height="11" viewBox="0 0 14 11" fill="#444"><rect x="5" y="0" width="4" height="3.5" rx="0.5"/><path d="M7 3.5 V5.5 M2 7 V5.5 H12 V7" stroke="#444" stroke-width="1" fill="none"/><rect x="0" y="6.8" width="4" height="4.2" rx="0.8"/><rect x="5" y="6.8" width="4" height="4.2" rx="0.8"/><rect x="10" y="6.8" width="4" height="4.2" rx="0.8"/></svg>
<div class="cb" style="left:218px;top:224.30px"></div>
<div class="t b" style="left:246.5px;top:221.40px;font-size:13px;line-height:20px;color:#444;">Gemini Furniture</div>
<div class="t b" style="left:450px;top:221.40px;font-size:13px;line-height:20px;color:#444;">(941)-284-4875</div>
<div class="t b" style="left:608.5px;top:221.40px;font-size:13px;line-height:20px;color:#444;">gemini.furniture39@example.com</div>
<svg class="hi" style="left:951px;top:224.60px" width="15" height="15" viewBox="0 0 15 15"><circle cx="7.5" cy="7.5" r="6.6" fill="none" stroke="#d6d6d6" stroke-width="1.5"/><path d="M7.6 4 V8.6 H5" fill="none" stroke="#d6d6d6" stroke-width="1.1"/></svg>
<div class="t b" style="left:1041px;top:221.40px;font-size:13px;line-height:20px;color:#444;">Fairfield</div>
<div class="t b" style="left:1131.5px;top:221.40px;font-size:13px;line-height:20px;color:#444;">United States</div>
<div style="position:absolute;left:180px;top:245px;width:1146px;height:27px;background:#ffffff;border-top:1px solid #dcdfe3;box-sizing:border-box"></div>
<div class="cb" style="left:218px;top:252.00px"></div>
<div class="t" style="left:246.5px;top:249.10px;font-size:13px;line-height:20px;color:#4c4c4c;letter-spacing:-0.16px">Gemini Furniture, Edwin Hansen</div>
<div class="t" style="left:450px;top:249.10px;font-size:13px;line-height:20px;color:#4c4c4c;">(943)-352-2555</div>
<div class="t" style="left:608.5px;top:249.10px;font-size:13px;line-height:20px;color:#4c4c4c;">edwin.hansen58@example.com</div>
<svg class="hi" style="left:951px;top:252.30px" width="15" height="15" viewBox="0 0 15 15"><circle cx="7.5" cy="7.5" r="6.6" fill="none" stroke="#d6d6d6" stroke-width="1.5"/><path d="M7.6 4 V8.6 H5" fill="none" stroke="#d6d6d6" stroke-width="1.1"/></svg>
<div class="t" style="left:1041px;top:249.10px;font-size:13px;line-height:20px;color:#4c4c4c;">Fairfield</div>
<div class="t" style="left:1131.5px;top:249.10px;font-size:13px;line-height:20px;color:#4c4c4c;">United States</div>
<div style="position:absolute;left:180px;top:272px;width:1146px;height:28px;background:#eff0f1;border-top:1px solid #dcdfe3;box-sizing:border-box"></div>
<div class="cb" style="left:218px;top:279.70px"></div>
<div class="t" style="left:246.5px;top:276.80px;font-size:13px;line-height:20px;color:#4c4c4c;letter-spacing:-0.16px">Gemini Furniture, Jesse Brown</div>
<div class="t" style="left:450px;top:276.80px;font-size:13px;line-height:20px;color:#4c4c4c;">(829)-386-3277</div>
<div class="t" style="left:608.5px;top:276.80px;font-size:13px;line-height:20px;color:#4c4c4c;">jesse.brown74@example.com</div>
<svg class="hi" style="left:951px;top:280.00px" width="15" height="15" viewBox="0 0 15 15"><circle cx="7.5" cy="7.5" r="6.6" fill="none" stroke="#d6d6d6" stroke-width="1.5"/><path d="M7.6 4 V8.6 H5" fill="none" stroke="#d6d6d6" stroke-width="1.1"/></svg>
<div class="t" style="left:1041px;top:276.80px;font-size:13px;line-height:20px;color:#4c4c4c;">Fairfield</div>
<div class="t" style="left:1131.5px;top:276.80px;font-size:13px;line-height:20px;color:#4c4c4c;">United States</div>
<div class="t" style="left:1228.5px;top:276.80px;font-size:13px;line-height:20px;color:#4c4c4c;">My Company (<span style="font-size:10.5px">&hellip;</span></div>
<div style="position:absolute;left:180px;top:300px;width:1146px;height:28px;background:#ffffff;border-top:1px solid #dcdfe3;box-sizing:border-box"></div>
<div class="cb" style="left:218px;top:307.40px"></div>
<div class="t" style="left:246.5px;top:304.50px;font-size:13px;line-height:20px;color:#4c4c4c;letter-spacing:-0.16px">Gemini Furniture, Oscar Morgan</div>
<div class="t" style="left:450px;top:304.50px;font-size:13px;line-height:20px;color:#4c4c4c;">(561)-239-1744</div>
<div class="t" style="left:608.5px;top:304.50px;font-size:13px;line-height:20px;color:#4c4c4c;">oscar.morgan11@example.com</div>
<svg class="hi" style="left:951px;top:307.70px" width="15" height="15" viewBox="0 0 15 15"><circle cx="7.5" cy="7.5" r="6.6" fill="none" stroke="#d6d6d6" stroke-width="1.5"/><path d="M7.6 4 V8.6 H5" fill="none" stroke="#d6d6d6" stroke-width="1.1"/></svg>
<div class="t" style="left:1041px;top:304.50px;font-size:13px;line-height:20px;color:#4c4c4c;">Fairfield</div>
<div class="t" style="left:1131.5px;top:304.50px;font-size:13px;line-height:20px;color:#4c4c4c;">United States</div>
<div style="position:absolute;left:180px;top:328px;width:1146px;height:28px;background:#eff0f1;border-top:1px solid #dcdfe3;box-sizing:border-box"></div>
<div class="cb" style="left:218px;top:335.10px"></div>
<div class="t" style="left:246.5px;top:332.20px;font-size:13px;line-height:20px;color:#4c4c4c;letter-spacing:-0.16px">Gemini Furniture, Soham Palmer</div>
<div class="t" style="left:450px;top:332.20px;font-size:13px;line-height:20px;color:#4c4c4c;">(379)-167-2040</div>
<div class="t" style="left:608.5px;top:332.20px;font-size:13px;line-height:20px;color:#4c4c4c;">soham.palmer15@example.com</div>
<svg class="hi" style="left:951px;top:335.40px" width="15" height="15" viewBox="0 0 15 15"><circle cx="7.5" cy="7.5" r="6.6" fill="none" stroke="#d6d6d6" stroke-width="1.5"/><path d="M7.6 4 V8.6 H5" fill="none" stroke="#d6d6d6" stroke-width="1.1"/></svg>
<div class="t" style="left:1041px;top:332.20px;font-size:13px;line-height:20px;color:#4c4c4c;">Fairfield</div>
<div class="t" style="left:1131.5px;top:332.20px;font-size:13px;line-height:20px;color:#4c4c4c;">United States</div>
<div style="position:absolute;left:180px;top:356px;width:1146px;height:27px;background:#e9ebef;border-top:1px solid #dcdfe3;box-sizing:border-box"></div>
<svg class="hi" style="left:183px;top:364.10px" width="14" height="11" viewBox="0 0 14 11" fill="#444"><rect x="5" y="0" width="4" height="3.5" rx="0.5"/><path d="M7 3.5 V5.5 M2 7 V5.5 H12 V7" stroke="#444" stroke-width="1" fill="none"/><rect x="0" y="6.8" width="4" height="4.2" rx="0.8"/><rect x="5" y="6.8" width="4" height="4.2" rx="0.8"/><rect x="10" y="6.8" width="4" height="4.2" rx="0.8"/></svg>
<div class="cb" style="left:218px;top:362.80px"></div>
<div class="t b" style="left:246.5px;top:359.90px;font-size:13px;line-height:20px;color:#444;">Lumber Inc</div>
<div class="t b" style="left:450px;top:359.90px;font-size:13px;line-height:20px;color:#444;">(828)-316-0593</div>
<div class="t b" style="left:608.5px;top:359.90px;font-size:13px;line-height:20px;color:#444;">lumber-inv92@example.com</div>
<svg class="hi" style="left:951px;top:363.10px" width="15" height="15" viewBox="0 0 15 15"><circle cx="7.5" cy="7.5" r="6.6" fill="none" stroke="#d6d6d6" stroke-width="1.5"/><path d="M7.6 4 V8.6 H5" fill="none" stroke="#d6d6d6" stroke-width="1.1"/></svg>
<div class="t b" style="left:1041px;top:359.90px;font-size:13px;line-height:20px;color:#444;">Stockton</div>
<div class="t b" style="left:1131.5px;top:359.90px;font-size:13px;line-height:20px;color:#444;">United States</div>
<div style="position:absolute;left:180px;top:383px;width:1146px;height:28px;background:#e9ebef;border-top:1px solid #dcdfe3;box-sizing:border-box"></div>
<svg class="hi" style="left:183px;top:391.80px" width="14" height="11" viewBox="0 0 14 11" fill="#444"><rect x="5" y="0" width="4" height="3.5" rx="0.5"/><path d="M7 3.5 V5.5 M2 7 V5.5 H12 V7" stroke="#444" stroke-width="1" fill="none"/><rect x="0" y="6.8" width="4" height="4.2" rx="0.8"/><rect x="5" y="6.8" width="4" height="4.2" rx="0.8"/><rect x="10" y="6.8" width="4" height="4.2" rx="0.8"/></svg>
<div class="cb" style="left:218px;top:390.50px"></div>
<div class="t b" style="left:246.5px;top:387.60px;font-size:13px;line-height:20px;color:#444;">My Company (Chicago)</div>
<div class="t b" style="left:450px;top:387.60px;font-size:13px;line-height:20px;color:#444;">+1 312 349 3030</div>
<div class="t b" style="left:608.5px;top:387.60px;font-size:13px;line-height:20px;color:#444;">chicago@yourcompany.com</div>
<svg class="hi" style="left:951px;top:390.80px" width="15" height="15" viewBox="0 0 15 15"><circle cx="7.5" cy="7.5" r="6.6" fill="none" stroke="#d6d6d6" stroke-width="1.5"/><path d="M7.6 4 V8.6 H5" fill="none" stroke="#d6d6d6" stroke-width="1.1"/></svg>
<div class="t b" style="left:1041px;top:387.60px;font-size:13px;line-height:20px;color:#444;">Chicago</div>
<div class="t b" style="left:1131.5px;top:387.60px;font-size:13px;line-height:20px;color:#444;">United States</div>
<div style="position:absolute;left:180px;top:411px;width:1146px;height:28px;background:#e9ebef;border-top:1px solid #dcdfe3;box-sizing:border-box"></div>
<svg class="hi" style="left:183px;top:419.50px" width="14" height="11" viewBox="0 0 14 11" fill="#444"><rect x="5" y="0" width="4" height="3.5" rx="0.5"/><path d="M7 3.5 V5.5 M2 7 V5.5 H12 V7" stroke="#444" stroke-width="1" fill="none"/><rect x="0" y="6.8" width="4" height="4.2" rx="0.8"/><rect x="5" y="6.8" width="4" height="4.2" rx="0.8"/><rect x="10" y="6.8" width="4" height="4.2" rx="0.8"/></svg>
<div class="cb" style="left:218px;top:418.20px"></div>
<div class="t b" style="left:246.5px;top:415.30px;font-size:13px;line-height:20px;color:#444;">My Company (San Francisco)</div>
<div class="t b" style="left:450px;top:415.30px;font-size:13px;line-height:20px;color:#444;">+91 (800) (047) (3006)</div>
<div class="t b" style="left:608.5px;top:415.30px;font-size:13px;line-height:20px;color:#444;">contact@geminatecs.com</div>
<svg class="hi" style="left:951px;top:418.50px" width="15" height="15" viewBox="0 0 15 15"><circle cx="7.5" cy="7.5" r="6.6" fill="none" stroke="#d6d6d6" stroke-width="1.5"/><path d="M7.6 4 V8.6 H5" fill="none" stroke="#d6d6d6" stroke-width="1.1"/></svg>
<div class="t b" style="left:1041px;top:415.30px;font-size:13px;line-height:20px;color:#444;">Ahmedabad</div>
<div class="t b" style="left:1131.5px;top:415.30px;font-size:13px;line-height:20px;color:#444;">India</div>
<div style="position:absolute;left:180px;top:439px;width:1146px;height:27px;background:#e9ebef;border-top:1px solid #dcdfe3;box-sizing:border-box"></div>
<svg class="hi" style="left:183px;top:447.20px" width="14" height="11" viewBox="0 0 14 11" fill="#444"><rect x="5" y="0" width="4" height="3.5" rx="0.5"/><path d="M7 3.5 V5.5 M2 7 V5.5 H12 V7" stroke="#444" stroke-width="1" fill="none"/><rect x="0" y="6.8" width="4" height="4.2" rx="0.8"/><rect x="5" y="6.8" width="4" height="4.2" rx="0.8"/><rect x="10" y="6.8" width="4" height="4.2" rx="0.8"/></svg>
<div class="cb" style="left:218px;top:445.90px"></div>
<div class="t b" style="left:246.5px;top:443.00px;font-size:13px;line-height:20px;color:#444;">Ready Mat</div>
<div class="t b" style="left:450px;top:443.00px;font-size:13px;line-height:20px;color:#444;">(803)-873-6126</div>
<div class="t b" style="left:608.5px;top:443.00px;font-size:13px;line-height:20px;color:#444;">ready.mat28@example.com</div>
<svg class="hi" style="left:951px;top:446.20px" width="15" height="15" viewBox="0 0 15 15"><circle cx="7.5" cy="7.5" r="6.6" fill="none" stroke="#d6d6d6" stroke-width="1.5"/><path d="M7.6 4 V8.6 H5" fill="none" stroke="#d6d6d6" stroke-width="1.1"/></svg>
<div class="t b" style="left:1041px;top:443.00px;font-size:13px;line-height:20px;color:#444;">Tracy</div>
<div class="t b" style="left:1131.5px;top:443.00px;font-size:13px;line-height:20px;color:#444;">United States</div>
<div style="position:absolute;left:180px;top:466px;width:1146px;height:28px;background:#e9ebef;border-top:1px solid #dcdfe3;box-sizing:border-box"></div>
<svg class="hi" style="left:183px;top:474.90px" width="14" height="11" viewBox="0 0 14 11" fill="#444"><rect x="5" y="0" width="4" height="3.5" rx="0.5"/><path d="M7 3.5 V5.5 M2 7 V5.5 H12 V7" stroke="#444" stroke-width="1" fill="none"/><rect x="0" y="6.8" width="4" height="4.2" rx="0.8"/><rect x="5" y="6.8" width="4" height="4.2" rx="0.8"/><rect x="10" y="6.8" width="4" height="4.2" rx="0.8"/></svg>
<div class="cb" style="left:218px;top:473.60px"></div>
<div class="t b" style="left:246.5px;top:470.70px;font-size:13px;line-height:20px;color:#444;">The Jackson Group</div>
<div class="t b" style="left:450px;top:470.70px;font-size:13px;line-height:20px;color:#444;">(334)-502-1024</div>
<div class="t b" style="left:608.5px;top:470.70px;font-size:13px;line-height:20px;color:#444;">jackson.group82@example.com</div>
<svg class="hi" style="left:951px;top:473.90px" width="15" height="15" viewBox="0 0 15 15"><circle cx="7.5" cy="7.5" r="6.6" fill="none" stroke="#d6d6d6" stroke-width="1.5"/><path d="M7.6 4 V8.6 H5" fill="none" stroke="#d6d6d6" stroke-width="1.1"/></svg>
<div class="t b" style="left:1041px;top:470.70px;font-size:13px;line-height:20px;color:#444;">Tracy</div>
<div class="t b" style="left:1131.5px;top:470.70px;font-size:13px;line-height:20px;color:#444;">United States</div>
<div style="position:absolute;left:180px;top:494px;width:1146px;height:28px;background:#e9ebef;border-top:1px solid #dcdfe3;box-sizing:border-box"></div>
<svg class="hi" style="left:183px;top:502.60px" width="14" height="11" viewBox="0 0 14 11" fill="#444"><rect x="5" y="0" width="4" height="3.5" rx="0.5"/><path d="M7 3.5 V5.5 M2 7 V5.5 H12 V7" stroke="#444" stroke-width="1" fill="none"/><rect x="0" y="6.8" width="4" height="4.2" rx="0.8"/><rect x="5" y="6.8" width="4" height="4.2" rx="0.8"/><rect x="10" y="6.8" width="4" height="4.2" rx="0.8"/></svg>
<div class="cb" style="left:218px;top:501.30px"></div>
<div class="t b" style="left:246.5px;top:498.40px;font-size:13px;line-height:20px;color:#444;">Wood Corner</div>
<div class="t b" style="left:450px;top:498.40px;font-size:13px;line-height:20px;color:#444;">(623)-853-7197</div>
<div class="t b" style="left:608.5px;top:498.40px;font-size:13px;line-height:20px;color:#444;">wood.corner26@example.com</div>
<svg class="hi" style="left:951px;top:501.60px" width="15" height="15" viewBox="0 0 15 15"><circle cx="7.5" cy="7.5" r="6.6" fill="none" stroke="#d6d6d6" stroke-width="1.5"/><path d="M7.6 4 V8.6 H5" fill="none" stroke="#d6d6d6" stroke-width="1.1"/></svg>
<div class="t b" style="left:1041px;top:498.40px;font-size:13px;line-height:20px;color:#444;">Turlock</div>
<div class="t b" style="left:1131.5px;top:498.40px;font-size:13px;line-height:20px;color:#444;">United States</div>
<div style="position:absolute;left:180px;top:160px;width:1146px;height:3px;background:#dee2e6"></div>
<div style="position:absolute;left:180px;top:522px;width:1045px;height:8px;background:#eeeeee;border-top:1px solid #dcdfe3;box-sizing:border-box"></div>
<div style="position:absolute;left:1225px;top:522px;width:101px;height:8px;background:#ffffff"></div>
<div class="rb" style="left:40px;top:-0.7px;width:94px;height:40.3px;border:4px solid #ffff00;border-radius:3px"></div>
<div class="rb" style="left:0px;top:80px;width:172px;height:37px;border:4px solid #ff0000;border-radius:3px"></div>
<div class="rb" style="left:189px;top:51px;width:166px;height:34px;border:2px solid #ff0000;border-radius:1.5px"></div>
<div class="rb" style="left:1244px;top:85px;width:40px;height:40px;border:2px solid #ff0000;border-radius:1.5px"></div>
<div class="rb" style="left:175px;top:217px;width:26px;height:27px;border:2px solid #ff0000;border-radius:1.5px"></div>
<div class="rb" style="left:213px;top:244px;width:1093px;height:107px;border:2px solid #ff0000;border-radius:1.5px"></div>
</body></html>
